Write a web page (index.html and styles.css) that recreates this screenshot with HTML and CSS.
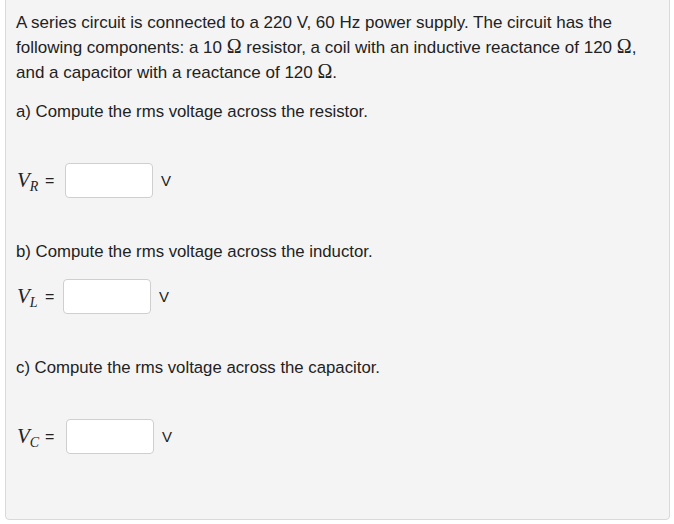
FILE: index.html
```html
<!DOCTYPE html>
<html>
<head>
<meta charset="utf-8">
<link rel="stylesheet" href="styles.css">
</head>
<body>
<div class="card">
  <p class="intro"><span class="seg">A series circuit is connected to a 220 V, 60 Hz power supply. The circuit has the</span> <span class="seg">following components: a 10 </span><span class="ohm">Ω</span><span class="seg"> resistor, a coil with an inductive reactance of 120 </span><span class="ohm">Ω</span><span class="seg">,</span> <span class="seg">and a capacitor with a reactance of 120 </span><span class="ohm">Ω</span><span class="seg">.</span></p>

  <p class="q q-a">a) Compute the rms voltage across the resistor.</p>
  <div class="answer ans-a">
    <span class="var"><i>V</i><sub>R</sub></span><span class="eq">=</span><span class="box"></span><span class="unit">V</span>
  </div>

  <p class="q q-b">b) Compute the rms voltage across the inductor.</p>
  <div class="answer ans-b">
    <span class="var"><i>V</i><sub>L</sub></span><span class="eq">=</span><span class="box"></span><span class="unit">V</span>
  </div>

  <p class="q q-c">c) Compute the rms voltage across the capacitor.</p>
  <div class="answer ans-c">
    <span class="var"><i>V</i><sub>C</sub></span><span class="eq">=</span><span class="box"></span><span class="unit">V</span>
  </div>
</div>
</body>
</html>
```

FILE: styles.css
```css
html, body {
  margin: 0;
  padding: 0;
  background: #ffffff;
}
body {
  font-family: "Liberation Sans", Arial, sans-serif;
  color: #222;
  overflow: hidden;
}
.card {
  box-sizing: border-box;
  margin: -6px 4px 0 5px;
  height: 526px;
  background: #f4f4f4;
  border: 1px solid #d9d9d9;
  border-radius: 4px;
  padding: 15px 10px 0 10px;
}
p {
  margin: 0;
  font-size: 16.75px;
  line-height: 25px;
}
.intro {
  font-size: 17px;
  width: 640px;
}
.ohm {
  display: inline-block;
  font-family: "Liberation Serif", "Times New Roman", serif;
  font-size: 20px;
  line-height: 18px;
}
.q-a { margin-top: 14px; }
.q-b { margin-top: 41px; }
.q-c { margin-top: 41px; }
.answer {
  display: flex;
  align-items: center;
  height: 35px;
}
.ans-a { margin-top: 39px; }
.ans-b { margin-top: 15px; }
.ans-c { margin-top: 39px; }
.var {
  font-family: "Liberation Serif", "Times New Roman", serif;
  font-size: 21px;
  width: 28px;
  padding-left: 1px;
  white-space: nowrap;
  line-height: 1;
}
.var i { font-style: italic; }
.var sub {
  font-style: italic;
  font-size: 14px;
  vertical-align: -4px;
  line-height: 0;
}
.eq {
  font-size: 16px;
  width: 20px;
}
.box {
  box-sizing: border-box;
  width: 88px;
  height: 35px;
  background: #fff;
  border: 1px solid #cfcfcf;
  border-radius: 4px;
}
.unit {
  font-size: 15px;
  margin-left: 8px;
}
.ans-b .eq { width: 18px; }
.ans-c .eq { width: 21px; }
```
